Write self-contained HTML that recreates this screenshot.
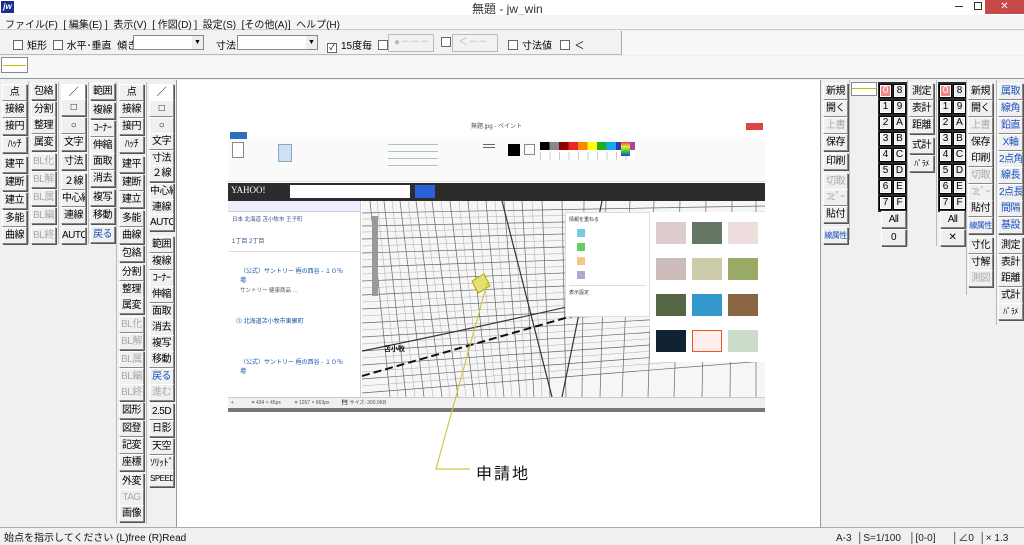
<!DOCTYPE html>
<html><head><meta charset="utf-8"><style>
*{margin:0;padding:0;box-sizing:border-box}
body{width:1024px;height:545px;overflow:hidden;background:#f0f0f0;font-family:"Liberation Sans","Noto Sans CJK JP",sans-serif;font-size:10px;color:#000;position:relative}
.a{position:absolute}
.b{position:absolute;width:25px;height:17px;background:#f0f0f0;border:1px solid;border-color:#fff #888 #888 #fff;box-shadow:1px 1px 0 #555;font-size:10px;line-height:15px;text-align:center;white-space:nowrap;overflow:hidden;letter-spacing:-0.5px}
.g{color:#aaa}.bl{color:#1a4fc0}
.sep{position:absolute;width:1px;background:#bbb}
.lb{position:absolute;width:13px;height:14px;background:#eee;border:1px solid #000;box-shadow:inset 0 0 0 1px #fff;font-size:10px;line-height:12px;text-align:center}
.cb{display:inline-block;width:10px;height:10px;border:1px solid #666;background:#fff;vertical-align:-1px;margin-right:4px}
</style></head><body>
<div class="a" style="left:0;top:0;width:1024px;height:15px;background:#fff"></div>
<div class="a" style="left:1px;top:1px;width:13px;height:12px;background:#1c2f8c;color:#fff;font-size:8px;font-weight:bold;line-height:12px;text-align:center;font-style:italic">jw</div>
<div class="a" style="left:472px;top:0;font-size:12px;color:#333">無題 - jw_win</div>
<div class="a" style="left:955px;top:6px;width:8px;height:1px;background:#333"></div>
<div class="a" style="left:974px;top:2px;width:8px;height:8px;border:1px solid #333"></div>
<div class="a" style="left:985px;top:0;width:39px;height:14px;background:#c74a4a;color:#fff;text-align:center;font-size:10px;line-height:14px">✕</div>
<div class="a" style="left:0;top:15px;width:1024px;height:15px;background:#f4f5f6;border-bottom:1px solid #ccc"></div>
<div class="a" style="left:5px;top:16px;font-size:10px;white-space:pre;color:#111">ファイル(F)  [ 編集(E) ]  表示(V)  [ 作図(D) ]  設定(S)  [その他(A)]  ヘルプ(H)</div>
<div class="a" style="left:0;top:31px;width:622px;height:24px;background:#f2f2f2;border-right:1px solid #aaa;border-bottom:1px solid #bbb"></div>
<div class="a" style="left:622px;top:31px;width:402px;height:24px;background:#f6f7f8"></div>
<div class="a" style="left:13px;top:37px;font-size:10px;white-space:nowrap"><span class="cb"></span>矩形 &nbsp;<span class="cb"></span>水平･垂直 &nbsp;傾き</div>
<div class="a" style="left:133px;top:35px;width:71px;height:15px;background:#fff;border:1px solid #888"></div>
<div class="a" style="left:192px;top:36px;width:11px;height:13px;background:#eee;font-size:7px;text-align:center;line-height:13px">▼</div>
<div class="a" style="left:216px;top:37px;font-size:10px">寸法</div>
<div class="a" style="left:237px;top:35px;width:81px;height:15px;background:#fff;border:1px solid #888"></div>
<div class="a" style="left:306px;top:36px;width:11px;height:13px;background:#eee;font-size:7px;text-align:center;line-height:13px">▼</div>
<div class="a" style="left:327px;top:37px;font-size:10px;white-space:nowrap"><span class="cb" style="font-size:8px;line-height:8px;text-align:center">✓</span>15度毎 &nbsp;<span class="cb"></span></div>
<div class="a" style="left:388px;top:34px;width:46px;height:18px;border:1px solid #bbb;background:#f2f2f2;color:#bbb;font-size:10px;line-height:16px;padding-left:5px">●－－－</div>
<div class="a" style="left:441px;top:37px"><span class="cb"></span></div>
<div class="a" style="left:452px;top:34px;width:46px;height:18px;border:1px solid #bbb;background:#f2f2f2;color:#bbb;font-size:10px;line-height:16px;padding-left:5px">＜－－－</div>
<div class="a" style="left:508px;top:37px;font-size:10px;white-space:nowrap"><span class="cb"></span>寸法値 &nbsp;&nbsp;<span class="cb"></span>＜</div>
<div class="a" style="left:0;top:56px;width:1024px;height:23px;background:#f6f7f8;border-bottom:1px solid #999"></div>
<div class="a" style="left:1px;top:57px;width:27px;height:16px;background:#fff;border:1px solid #888"></div>
<div class="a" style="left:3px;top:65px;width:23px;height:1px;background:#c8c000"></div>
<div class="a" style="left:176px;top:80px;width:644px;height:447px;background:#fff"></div>
<div class="sep" style="left:176px;top:80px;height:447px;background:#999"></div>
<div class="sep" style="left:28px;top:82px;height:162px"></div>
<div class="sep" style="left:58px;top:82px;height:162px"></div>
<div class="sep" style="left:88px;top:82px;height:162px"></div>
<div class="sep" style="left:116px;top:82px;height:162px"></div>
<div class="sep" style="left:146px;top:82px;height:442px"></div>
<div class="sep" style="left:116px;top:244px;height:280px"></div>
<div class="b" style="left:2px;top:84px">点</div>
<div class="b" style="left:2px;top:101px">接線</div>
<div class="b" style="left:2px;top:118px">接円</div>
<div class="b" style="left:2px;top:136px">ﾊｯﾁ</div>
<div class="b" style="left:2px;top:156px">建平</div>
<div class="b" style="left:2px;top:174px">建断</div>
<div class="b" style="left:2px;top:192px">建立</div>
<div class="b" style="left:2px;top:210px">多能</div>
<div class="b" style="left:2px;top:227px">曲線</div>
<div class="b" style="left:31px;top:83px">包絡</div>
<div class="b" style="left:31px;top:101px">分割</div>
<div class="b" style="left:31px;top:117px">整理</div>
<div class="b" style="left:31px;top:134px">属変</div>
<div class="b g" style="left:31px;top:153px">BL化</div>
<div class="b g" style="left:31px;top:171px">BL解</div>
<div class="b g" style="left:31px;top:189px">BL属</div>
<div class="b g" style="left:31px;top:207px">BL編</div>
<div class="b g" style="left:31px;top:227px">BL終</div>
<div class="b" style="left:61px;top:84px;background:#fff">／</div>
<div class="b" style="left:61px;top:99px">□</div>
<div class="b" style="left:61px;top:117px">○</div>
<div class="b" style="left:61px;top:134px">文字</div>
<div class="b" style="left:61px;top:153px">寸法</div>
<div class="b" style="left:61px;top:173px">２線</div>
<div class="b" style="left:61px;top:190px">中心線</div>
<div class="b" style="left:61px;top:207px">連線</div>
<div class="b" style="left:61px;top:227px">AUTO</div>
<div class="b" style="left:90px;top:83px">範囲</div>
<div class="b" style="left:90px;top:102px">複線</div>
<div class="b" style="left:90px;top:120px">ｺｰﾅｰ</div>
<div class="b" style="left:90px;top:137px">伸縮</div>
<div class="b" style="left:90px;top:153px">面取</div>
<div class="b" style="left:90px;top:170px">消去</div>
<div class="b" style="left:90px;top:189px">複写</div>
<div class="b" style="left:90px;top:207px">移動</div>
<div class="b bl" style="left:90px;top:226px">戻る</div>
<div class="b" style="left:119px;top:84px">点</div>
<div class="b" style="left:119px;top:101px">接線</div>
<div class="b" style="left:119px;top:118px">接円</div>
<div class="b" style="left:119px;top:136px">ﾊｯﾁ</div>
<div class="b" style="left:119px;top:156px">建平</div>
<div class="b" style="left:119px;top:174px">建断</div>
<div class="b" style="left:119px;top:191px">建立</div>
<div class="b" style="left:119px;top:210px">多能</div>
<div class="b" style="left:119px;top:227px">曲線</div>
<div class="b" style="left:119px;top:245px">包絡</div>
<div class="b" style="left:119px;top:264px">分割</div>
<div class="b" style="left:119px;top:281px">整理</div>
<div class="b" style="left:119px;top:297px">属変</div>
<div class="b g" style="left:119px;top:316px">BL化</div>
<div class="b g" style="left:119px;top:333px">BL解</div>
<div class="b g" style="left:119px;top:351px">BL属</div>
<div class="b g" style="left:119px;top:368px">BL編</div>
<div class="b g" style="left:119px;top:384px">BL終</div>
<div class="b" style="left:119px;top:402px">図形</div>
<div class="b" style="left:119px;top:420px">図登</div>
<div class="b" style="left:119px;top:437px">記変</div>
<div class="b" style="left:119px;top:454px">座標</div>
<div class="b" style="left:119px;top:473px">外変</div>
<div class="b g" style="left:119px;top:489px">TAG</div>
<div class="b" style="left:119px;top:505px">画像</div>
<div class="b" style="left:149px;top:84px;background:#fff">／</div>
<div class="b" style="left:149px;top:100px">□</div>
<div class="b" style="left:149px;top:117px">○</div>
<div class="b" style="left:149px;top:133px">文字</div>
<div class="b" style="left:149px;top:150px">寸法</div>
<div class="b" style="left:149px;top:165px">２線</div>
<div class="b" style="left:149px;top:183px">中心線</div>
<div class="b" style="left:149px;top:199px">連線</div>
<div class="b" style="left:149px;top:214px">AUTO</div>
<div class="b" style="left:149px;top:236px">範囲</div>
<div class="b" style="left:149px;top:253px">複線</div>
<div class="b" style="left:149px;top:270px">ｺｰﾅｰ</div>
<div class="b" style="left:149px;top:286px">伸縮</div>
<div class="b" style="left:149px;top:303px">面取</div>
<div class="b" style="left:149px;top:319px">消去</div>
<div class="b" style="left:149px;top:335px">複写</div>
<div class="b" style="left:149px;top:351px">移動</div>
<div class="b bl" style="left:149px;top:368px">戻る</div>
<div class="b g" style="left:149px;top:384px">進む</div>
<div class="b" style="left:149px;top:403px">2.5D</div>
<div class="b" style="left:149px;top:420px">日影</div>
<div class="b" style="left:149px;top:438px">天空</div>
<div class="b" style="left:149px;top:455px">ｿﾘｯﾄﾞ</div>
<div class="b" style="left:149px;top:470px;font-size:8px">SPEED</div>

<div class="sep" style="left:820px;top:80px;height:447px;background:#999"></div>
<div class="b" style="left:823px;top:83px">新規</div>
<div class="b" style="left:823px;top:100px">開く</div>
<div class="b g" style="left:823px;top:117px">上書</div>
<div class="b" style="left:823px;top:134px">保存</div>
<div class="b" style="left:823px;top:153px">印刷</div>
<div class="b g" style="left:823px;top:173px">切取</div>
<div class="b g" style="left:823px;top:189px">ｺﾋﾟｰ</div>
<div class="b" style="left:823px;top:206px">貼付</div>
<div class="b bl" style="left:823px;top:227px;font-size:8px">線属性</div>
<div class="sep" style="left:849px;top:80px;height:160px"></div>
<div class="a" style="left:851px;top:82px;width:26px;height:14px;background:#fff;border:1px solid #888"></div>
<div class="a" style="left:852px;top:88px;width:24px;height:1px;background:#c8c000"></div>
<div class="a" style="left:878px;top:82px;width:30px;height:130px;background:#2a2a2a"></div>
<div class="lb" style="left:879px;top:84px;background:#e88;color:#fff">0</div>
<div class="lb" style="left:893px;top:84px">8</div>
<div class="lb" style="left:879px;top:100px">1</div><div class="lb" style="left:893px;top:100px">9</div>
<div class="lb" style="left:879px;top:116px">2</div><div class="lb" style="left:893px;top:116px">A</div>
<div class="lb" style="left:879px;top:132px">3</div><div class="lb" style="left:893px;top:132px">B</div>
<div class="lb" style="left:879px;top:148px">4</div><div class="lb" style="left:893px;top:148px">C</div>
<div class="lb" style="left:879px;top:164px">5</div><div class="lb" style="left:893px;top:164px">D</div>
<div class="lb" style="left:879px;top:180px">6</div><div class="lb" style="left:893px;top:180px">E</div>
<div class="lb" style="left:879px;top:196px">7</div><div class="lb" style="left:893px;top:196px">F</div>
<div class="b" style="left:881px;top:211px">All</div>
<div class="b" style="left:881px;top:229px">0</div>
<div class="sep" style="left:907px;top:80px;height:166px"></div>
<div class="b" style="left:909px;top:83px">測定</div>
<div class="b" style="left:909px;top:100px">表計</div>
<div class="b" style="left:909px;top:117px">距離</div>
<div class="b" style="left:909px;top:137px">式計</div>
<div class="b" style="left:909px;top:155px;font-size:8px">ﾊﾟﾗﾒ</div>
<div class="sep" style="left:936px;top:80px;height:166px"></div>
<div class="a" style="left:938px;top:82px;width:29px;height:130px;background:#2a2a2a"></div>
<div class="lb" style="left:939px;top:84px;background:#e88;color:#fff">0</div>
<div class="lb" style="left:953px;top:84px">8</div>
<div class="lb" style="left:939px;top:100px">1</div><div class="lb" style="left:953px;top:100px">9</div>
<div class="lb" style="left:939px;top:116px">2</div><div class="lb" style="left:953px;top:116px">A</div>
<div class="lb" style="left:939px;top:132px">3</div><div class="lb" style="left:953px;top:132px">B</div>
<div class="lb" style="left:939px;top:148px">4</div><div class="lb" style="left:953px;top:148px">C</div>
<div class="lb" style="left:939px;top:164px">5</div><div class="lb" style="left:953px;top:164px">D</div>
<div class="lb" style="left:939px;top:180px">6</div><div class="lb" style="left:953px;top:180px">E</div>
<div class="lb" style="left:939px;top:196px">7</div><div class="lb" style="left:953px;top:196px">F</div>
<div class="b" style="left:940px;top:211px">All</div>
<div class="b" style="left:940px;top:229px">✕</div>
<div class="sep" style="left:966px;top:80px;height:215px"></div>
<div class="b" style="left:968px;top:83px">新規</div>
<div class="b" style="left:968px;top:100px">開く</div>
<div class="b g" style="left:968px;top:117px">上書</div>
<div class="b" style="left:968px;top:134px">保存</div>
<div class="b" style="left:968px;top:150px">印刷</div>
<div class="b g" style="left:968px;top:167px">切取</div>
<div class="b g" style="left:968px;top:184px">ｺﾋﾟｰ</div>
<div class="b" style="left:968px;top:200px">貼付</div>
<div class="b bl" style="left:968px;top:217px;font-size:8px">線属性</div>
<div class="b" style="left:968px;top:237px">寸化</div>
<div class="b" style="left:968px;top:254px">寸解</div>
<div class="b g" style="left:968px;top:270px">測図</div>
<div class="sep" style="left:996px;top:80px;height:245px"></div>
<div class="b bl" style="left:998px;top:83px">属取</div>
<div class="b bl" style="left:998px;top:100px">線角</div>
<div class="b bl" style="left:998px;top:117px">鉛直</div>
<div class="b bl" style="left:998px;top:134px">X軸</div>
<div class="b bl" style="left:998px;top:151px">2点角</div>
<div class="b bl" style="left:998px;top:167px">線長</div>
<div class="b bl" style="left:998px;top:184px">2点長</div>
<div class="b bl" style="left:998px;top:200px">間隔</div>
<div class="b bl" style="left:998px;top:217px">基設</div>
<div class="b" style="left:998px;top:237px">測定</div>
<div class="b" style="left:998px;top:254px">表計</div>
<div class="b" style="left:998px;top:270px">距離</div>
<div class="b" style="left:998px;top:287px">式計</div>
<div class="b" style="left:998px;top:303px;font-size:8px">ﾊﾟﾗﾒ</div>

<div class="a" style="left:228px;top:122px;width:537px;height:290px;background:#fff;overflow:hidden">
 <div class="a" style="left:0;top:0;width:537px;height:10px;background:#fff;font-size:6px;color:#555;text-align:center;line-height:10px">無題.jpg - ペイント</div>
 <div class="a" style="left:518px;top:1px;width:17px;height:7px;background:#d44"></div>
 <div class="a" style="left:0;top:10px;width:537px;height:7px;background:#fff"></div>
 <div class="a" style="left:2px;top:10px;width:17px;height:7px;background:#2a6fc0"></div>
 <div class="a" style="left:0;top:17px;width:537px;height:43px;background:#fafafa;border-bottom:1px solid #ddd"></div>
 <div class="a" style="left:4px;top:20px;width:12px;height:16px;border:1px solid #888;background:#fff"></div>
 <div class="a" style="left:50px;top:22px;width:14px;height:18px;background:#cfe0f5;border:1px solid #8ab"></div>
 <div class="a" style="left:160px;top:22px;width:50px;height:22px;background:repeating-linear-gradient(180deg,#8aa 0 1px,transparent 1px 7px);opacity:.7"></div>
 <div class="a" style="left:255px;top:22px;width:12px;height:6px;background:repeating-linear-gradient(180deg,#666 0 1px,transparent 1px 3px)"></div>
 <div class="a" style="left:280px;top:22px;width:12px;height:12px;background:#000"></div>
 <div class="a" style="left:296px;top:22px;width:11px;height:11px;border:1px solid #888"></div>
 <div class="a" style="left:312px;top:20px;width:95px;height:8px;background:linear-gradient(90deg,#000 0 10%,#888 10% 20%,#800 20% 30%,#e22 30% 40%,#f80 40% 50%,#ff0 50% 60%,#2a2 60% 70%,#1ae 70% 80%,#33b 80% 90%,#a4a 90%)"></div>
 <div class="a" style="left:312px;top:30px;width:95px;height:8px;background:repeating-linear-gradient(90deg,#ccc 0 1px,#fff 1px 9.5px)"></div>
 <div class="a" style="left:393px;top:20px;width:9px;height:14px;background:linear-gradient(#e33,#ee3,#3c3,#33e)"></div>
 <div class="a" style="left:0;top:61px;width:537px;height:18px;background:#2c2c2c"></div>
 <div class="a" style="left:3px;top:63px;color:#fff;font-size:9px;font-family:'Liberation Serif',serif">YAHOO!</div>
 <div class="a" style="left:62px;top:63px;width:120px;height:13px;background:#fff"></div>
 <div class="a" style="left:187px;top:63px;width:20px;height:13px;background:#2a62d8"></div>
 <div class="a" style="left:0;top:79px;width:133px;height:196px;background:#fff;border-right:1px solid #ccc;font-size:5.5px;color:#336">
  <div style="height:11px;background:#eef;border-bottom:1px solid #ccd"></div>
  <div style="padding:3px 4px;color:#358">日本 北海道 苫小牧市 王子町</div>
  <div style="padding:10px 4px 6px;font-size:6px;color:#358;border-bottom:1px solid #ddd">1丁目 2丁目</div>
  <div style="padding:14px 12px 0;color:#15a;font-size:6px">（公式）サントリー 極の西谷 - １０％増</div>
  <div style="padding:2px 12px;color:#555">サントリー 健康商品 ...</div>
  <div style="padding:20px 8px 0;color:#15a;font-size:6px">⓵ 北海道苫小牧市東雁町</div>
  <div style="padding:12px 12px 0;color:#15a;font-size:6px;margin-top:20px">（公式）サントリー 極の西谷 - １０％増</div>
 </div>
 <svg class="a" style="left:134px;top:79px" width="403" height="196">
  <rect width="403" height="196" fill="#f6f6f6"/>
  <g stroke="#666" stroke-width=".7" fill="none">
   <path d="M0 12 L403 5 M0 25 L403 17 M0 38 L403 28 M0 52 L403 40 M0 66 L403 52 M0 80 L403 64 M0 94 L403 76 M0 108 L403 88 M0 122 L403 100 M0 136 L403 112 M0 150 L403 124 M0 164 L403 136 M0 178 L403 148 M0 192 L403 160"/>
   <path d="M8 0 L28 196 M22 0 L44 196 M38 0 L62 196 M54 0 L80 196 M70 0 L96 196 M88 0 L112 196 M106 0 L126 196 M124 0 L142 196 M142 0 L158 196 M160 0 L172 196 M180 0 L188 196 M200 0 L204 196 M222 0 L220 196 M244 0 L238 196 M268 0 L260 196 M292 0 L286 196 M318 0 L312 196 M344 0 L340 196 M370 0 L368 196 M394 0 L394 196"/>
  </g>
  <g stroke="#999" stroke-width=".4" fill="none">
   <path d="M0 18 L403 11 M0 31 L403 22 M0 45 L403 34 M0 59 L403 46 M0 73 L403 58 M0 87 L403 70 M0 101 L403 82 M0 115 L403 94 M0 129 L403 106 M0 143 L403 118 M0 157 L403 130 M0 171 L403 142 M0 185 L403 154"/>
   <path d="M15 0 L36 196 M30 0 L53 196 M46 0 L71 196 M62 0 L88 196 M79 0 L104 196 M97 0 L119 196 M115 0 L134 196 M133 0 L150 196 M151 0 L165 196 M170 0 L180 196"/>
  </g>
  <g stroke="#333" stroke-width="1.2" fill="none"><path d="M0 150 Q150 120 403 60 M140 0 L190 196 M240 0 L200 196"/></g>
  <path d="M0 175 L403 60" stroke="#111" stroke-width="2" stroke-dasharray="8 4"/>
  <rect x="10" y="15" width="6" height="80" fill="#999"/>
  <path d="M110 80 L122 73 L128 85 L116 92Z" fill="#e6e070" stroke="#aa0"/>
  <text x="22" y="150" font-size="7" font-weight="bold" fill="#111">苫小牧</text>
 </svg>
 <div class="a" style="left:337px;top:90px;width:85px;height:105px;background:#fff;border:1px solid #ddd;font-size:5px;color:#333;padding:3px">
  <div style="margin-bottom:5px">情報を重ねる</div>
  <div style="height:8px;margin:6px 0;background:linear-gradient(90deg,#fff 0 8px,#7cd 8px 16px,#fff 16px)"></div>
  <div style="height:8px;margin:6px 0;background:linear-gradient(90deg,#fff 0 8px,#6c6 8px 16px,#fff 16px)"></div>
  <div style="height:8px;margin:6px 0;background:linear-gradient(90deg,#fff 0 8px,#ec8 8px 16px,#fff 16px)"></div>
  <div style="height:8px;margin:6px 0;background:linear-gradient(90deg,#fff 0 8px,#aac 8px 16px,#fff 16px)"></div>
  <div style="border-top:1px solid #ddd;padding-top:3px">表示設定</div>
 </div>
 <div class="a" style="left:422px;top:90px;width:115px;height:150px;background:#fff;display:grid;grid-template-columns:repeat(3,30px);gap:14px 6px;padding:10px 6px">
  <div style="height:22px;background:#dcc"></div><div style="height:22px;background:#676"></div><div style="height:22px;background:#edd"></div>
  <div style="height:22px;background:#cbb"></div><div style="height:22px;background:#cca"></div><div style="height:22px;background:#9a6"></div>
  <div style="height:22px;background:#564"></div><div style="height:22px;background:#39c"></div><div style="height:22px;background:#864"></div>
  <div style="height:22px;background:#123"></div><div style="height:22px;background:#fee;border:1px solid #e52"></div><div style="height:22px;background:#cdc"></div>
 </div>
 <div class="a" style="left:0;top:275px;width:537px;height:11px;background:#f0f0f0;border-top:1px solid #ccc;font-size:5px;color:#555;line-height:10px;white-space:pre">  +             ⌗ 434 × 45px          ⌗ 1267 × 663px         💾 サイズ: 300.0KB</div>
 <div class="a" style="left:0;top:286px;width:537px;height:4px;background:#777"></div>
</div>
<svg class="a" style="left:0;top:0" width="1024" height="545"><path d="M488 280 L436 469 L470 469" stroke="#d0c840" stroke-width="1.2" fill="none"/></svg>
<div class="a" style="left:476px;top:460px;font-size:16px;letter-spacing:2px;color:#111">申請地</div>
<div class="a" style="left:0;top:527px;width:1024px;height:18px;background:#f0f0f0;border-top:1px solid #aaa"></div>
<div class="a" style="left:4px;top:529px;font-size:10px;color:#111">始点を指示してください (L)free (R)Read</div>
<div class="a" style="left:836px;top:529px;font-size:10px;white-space:pre;color:#222">A-3  │S=1/100   │[0-0]      │∠0  │× 1.3</div>
</body></html>
